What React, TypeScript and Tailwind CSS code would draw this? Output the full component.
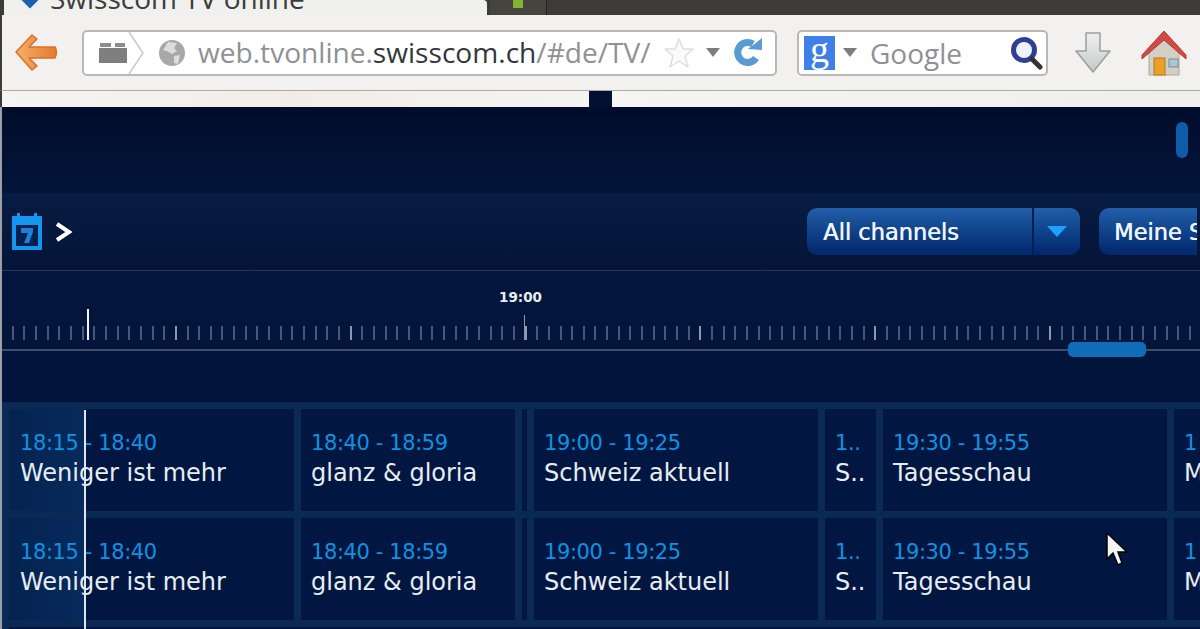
import React from "react"

interface Show {
  width: string
  pad: string
  time: string
  title: string
}

const SHOWS: Show[] = [
  { width: "w-[285px]", pad: "pl-[11px]", time: "18:15 - 18:40", title: "Weniger ist mehr" },
  { width: "w-[214px]", pad: "pl-[10px]", time: "18:40 - 18:59", title: "glanz & gloria" },
  { width: "w-[5px]", pad: "pl-0", time: "", title: "" },
  { width: "w-[284px]", pad: "pl-[10px]", time: "19:00 - 19:25", title: "Schweiz aktuell" },
  { width: "w-[51px]", pad: "pl-[10px]", time: "1..", title: "S..", },
  { width: "w-[284px]", pad: "pl-[10px]", time: "19:30 - 19:55", title: "Tagesschau" },
  { width: "w-[60px]", pad: "pl-[10px]", time: "1", title: "M" },
]

const TICKS = Array.from({ length: 102 }, (_, i) => i + 1)

function BackArrow() {
  return (
    <svg width="46" height="42" viewBox="0 0 46 42" className="shrink-0">
      <defs>
        <linearGradient id="orange" x1="0" y1="0" x2="1" y2="0">
          <stop offset="0" stopColor="#f3b069" />
          <stop offset="1" stopColor="#e57a2e" />
        </linearGradient>
      </defs>
      <path
        d="M1 20 L17 3 L22 7 L14 15 L40 15 Q43 20 40 26 L14 26 L22 34 L17 38 Z"
        fill="url(#orange)"
        stroke="#dc6f2a"
        strokeWidth="1.5"
        strokeLinejoin="round"
      />
    </svg>
  )
}

function Globe() {
  return (
    <svg width="28" height="26" viewBox="0 0 28 26" className="shrink-0">
      <circle cx="14" cy="13" r="13" fill="#a8a8a8" />
      <path d="M10 2 L19 3 L16 8 L19 11 L14 14 L9 11 L5 10 Z M16 16 L22 15 L20 24 L16 23 Z" fill="#dcdcdc" />
    </svg>
  )
}

function Star() {
  return (
    <svg width="32" height="32" viewBox="0 0 32 32" className="shrink-0">
      <path
        d="M16 2 L20 12 L30 12 L22 19 L25 30 L16 24 L7 30 L10 19 L2 12 L12 12 Z"
        fill="#fbfbfb"
        stroke="#dedede"
        strokeWidth="1.5"
        strokeLinejoin="round"
      />
    </svg>
  )
}

function Reload() {
  return (
    <svg width="30" height="32" viewBox="0 0 30 32" className="shrink-0">
      <path d="M23 21 A10 10 0 1 1 20 7" fill="none" stroke="#5b9bd3" strokeWidth="7" />
      <path d="M15 12 L29 13 L29 1 Z" fill="#5b9bd3" />
    </svg>
  )
}

function Magnifier() {
  return (
    <svg width="33" height="34" viewBox="0 0 33 34" className="shrink-0">
      <circle cx="14" cy="14" r="10.5" fill="#eef3fb" stroke="#2f3f96" strokeWidth="5" />
      <path d="M22 23 L30 31" stroke="#333" strokeWidth="5" strokeLinecap="round" />
    </svg>
  )
}

function DownArrow() {
  return (
    <svg width="36" height="42" viewBox="0 0 36 42" className="shrink-0">
      <defs>
        <linearGradient id="silver" x1="0" y1="0" x2="0" y2="1">
          <stop offset="0" stopColor="#eef0ef" />
          <stop offset="1" stopColor="#c4cac8" />
        </linearGradient>
      </defs>
      <path
        d="M11 1 L25 1 L25 19 L35 19 L18 40 L1 19 L11 19 Z"
        fill="url(#silver)"
        stroke="#9a9f9e"
        strokeWidth="1.5"
        strokeLinejoin="round"
      />
    </svg>
  )
}

function Home() {
  return (
    <svg width="46" height="46" viewBox="0 0 46 46" className="shrink-0">
      <path d="M8 20 L23 6 L38 20 L38 45 L8 45 Z" fill="#d3cfc4" stroke="#aaa69a" />
      <path d="M1 25 L23 1 L45 25 L45 29 L23 10 L1 29 Z" fill="#cf4b45" stroke="#b73a36" strokeLinejoin="round" />
      <rect x="13" y="28" width="11" height="17" fill="#e7a126" stroke="#b47a15" />
      <rect x="28" y="29" width="9" height="8" fill="#a9c7d9" stroke="#7b8c94" />
    </svg>
  )
}

function Calendar() {
  return (
    <svg width="30" height="38" viewBox="0 0 30 38" className="shrink-0">
      <path d="M0 3 H5 V0 H8 V3 H22 V0 H25 V3 H30 V37 H0 Z" fill="#1496f0" />
      <rect x="4" y="12" width="22" height="21" fill="#06204e" />
      <path d="M9 15 H21 V19 L17 30 H12 L16 20 H9 Z" fill="#1682d8" />
    </svg>
  )
}

function MouseCursor() {
  return (
    <svg width="24" height="38" viewBox="0 0 24 38" className="absolute left-[1105px] top-[532px]">
      <path d="M2 1 L2 27 L8 21 L13 33 L17 31 L13 20 L22 20 Z" fill="#f5f5f5" stroke="#000" strokeWidth="1.5" />
    </svg>
  )
}

function ShowCell({ show, highlight }: { show: Show; highlight: boolean }) {
  return (
    <div className={`${show.width} ${show.pad} relative h-full shrink-0 overflow-hidden whitespace-nowrap bg-[#011741] pt-[20px]`}>
      {highlight && <div className="absolute inset-y-0 left-0 w-[75px] bg-gradient-to-r from-[#042350] to-[#072a5c]" />}
      <div className="relative text-[21px] leading-[28px] tracking-[-0.4px] text-[#0d93e2]">{show.time}</div>
      <div className="relative text-[24px] leading-[32px] text-[#e8edf2]">{show.title}</div>
    </div>
  )
}

export default function App() {
  return (
    <div className="relative flex h-[629px] w-[1200px] flex-col overflow-hidden bg-[#02112f] font-['DejaVu_Sans',sans-serif]">
      {/* tab strip */}
      <div className="flex h-[15px] shrink-0 overflow-hidden bg-[#3c3b37] font-['Open_Sans',sans-serif]">
        <div className="ml-[4px] flex h-full w-[483px] items-end rounded-tr-[4px] bg-[#f0f0ee] pl-[20px]">
          <div className="mb-[9px] h-[12px] w-[12px] shrink-0 rotate-45 bg-[#1c5fae]" />
          <span className="mb-[1px] ml-[14px] whitespace-nowrap text-[28px] leading-[32px] text-[#3c3c3c]">Swisscom TV online</span>
        </div>
        <div className="ml-[3px] flex h-full w-[57px] justify-center border-r border-[#25241f] bg-[#45443f]">
          <div className="h-[8px] w-[10px] bg-[#84b334]" />
        </div>
      </div>

      {/* browser toolbar */}
      <div className="flex h-[76px] shrink-0 items-center border-b border-l-2 border-b-[#a9a9a7] border-l-[#3c3b37] bg-[#f2f1f0] pl-[13px] font-['Open_Sans',sans-serif]">
        <BackArrow />
        <div className="ml-[21px] flex h-[46px] w-[695px] shrink-0 items-center rounded-[5px] border-2 border-[#b9b8b5] bg-white pl-[15px]">
          <div className="flex h-[20px] w-[28px] shrink-0 flex-col">
            <div className="flex h-[4px] gap-[4px] px-[1px]">
              <div className="w-[11px] bg-[#8d8d8d]" />
              <div className="w-[10px] bg-[#8d8d8d]" />
            </div>
            <div className="mt-[1px] flex-1 bg-[#7f7f7f]" />
          </div>
          <svg width="16" height="42" viewBox="0 0 16 42" className="ml-[1px] shrink-0">
            <path d="M1 0 L15 21 L1 42" fill="none" stroke="#c9c8c5" strokeWidth="1.5" />
          </svg>
          <div className="ml-[14px]">
            <Globe />
          </div>
          <div className="ml-[12px] w-[455px] shrink-0 overflow-hidden whitespace-nowrap text-[28.1px] text-[#8f9193]">
            web.tvonline.<span className="text-[#33373c]">swisscom.ch</span>/#de/TV/
          </div>
          <div className="ml-[10px]">
            <Star />
          </div>
          <div className="ml-[11px] h-0 w-0 shrink-0 border-x-[7px] border-t-[9px] border-x-transparent border-t-[#7d7d7d]" />
          <div className="ml-[13px]">
            <Reload />
          </div>
        </div>

        <div className="ml-[20px] flex h-[46px] w-[251px] shrink-0 items-center rounded-[5px] border-2 border-[#b9b8b5] bg-white pl-[5px]">
          <div className="flex h-[34px] w-[31px] shrink-0 items-center justify-center overflow-hidden bg-[#3f7fe8] pb-[8px] font-['Liberation_Serif',serif] text-[38px] leading-none text-white">
            g
          </div>
          <div className="ml-[8px] h-0 w-0 shrink-0 border-x-[7px] border-t-[9px] border-x-transparent border-t-[#7d7d7d]" />
          <span className="ml-[13px] w-[140px] shrink-0 text-[28px] text-[#8f9193]">Google</span>
          <Magnifier />
        </div>

        <div className="ml-[27px]">
          <DownArrow />
        </div>
        <div className="ml-[30px]">
          <Home />
        </div>
      </div>

      {/* page strip above the player */}
      <div className="flex h-[16px] shrink-0 border-l-2 border-[#3c3b37]">
        <div className="w-[587px] bg-gradient-to-r from-[#f6f5f3] via-[#f3ece6] to-[#f5f4f2]" />
        <div className="w-[23px] bg-[#021033]" />
        <div className="flex-1 bg-gradient-to-r from-[#f5f5f3] to-[#eeeeec]" />
      </div>

      <div className="flex min-h-0 flex-1 flex-col border-l-2 border-[#9aa0a6]">
        {/* player band */}
        <div className="flex h-[86px] shrink-0 justify-end bg-gradient-to-b from-[#010c2b] to-[#03153b] pr-[12px] pt-[15px]">
          <div className="h-[36px] w-[12px] rounded-full bg-[#0d5ca8]" />
        </div>

        {/* date and channel filter */}
        <div className="flex h-[78px] shrink-0 items-center border-b border-[#22375c] bg-gradient-to-b from-[#081b42] to-[#041538] pl-[10px] pr-[3px]">
          <Calendar />
          <svg width="18" height="20" viewBox="0 0 18 20" className="ml-[13px] shrink-0">
            <path d="M2 2 L14 10 L2 18" fill="none" stroke="#fff" strokeWidth="4" />
          </svg>
          <div className="ml-[734px] flex h-[47px] w-[273px] shrink-0 items-stretch overflow-hidden rounded-[10px] bg-gradient-to-b from-[#215fa8] to-[#03266c] text-[22.5px] text-[#eef4fa] [text-shadow:0.5px_0_0_#eef4fa]">
            <div className="flex w-[227px] items-center border-r-2 border-[#04204e] pl-[16px] pt-[2px]">All channels</div>
            <div className="flex flex-1 items-center justify-center">
              <div className="h-0 w-0 border-x-[10px] border-t-[11px] border-x-transparent border-t-[#1ea0ff]" />
            </div>
          </div>
          <div className="ml-[19px] flex h-[47px] flex-1 items-center overflow-hidden whitespace-nowrap rounded-l-[10px] bg-gradient-to-b from-[#215fa8] to-[#03266c] pl-[15px] pt-[2px] text-[22.5px] text-[#eef4fa] [text-shadow:0.5px_0_0_#eef4fa]">
            Meine S
          </div>
        </div>

        {/* time ruler */}
        <div className="relative flex h-[80px] shrink-0 flex-col justify-end border-b-2 border-[#3f4d68] bg-[#03153a]">
          <div className="mb-[9px] flex h-[14px] items-stretch">
            {TICKS.map((t) => (
              <div key={t} className="flex w-[11.67px] shrink-0 justify-end">
                <div className={`w-[2px] ${t % 15 === 0 ? "bg-[#8c98ae]" : "bg-[#47577a]"}`} />
              </div>
            ))}
          </div>
          <span className="absolute left-[497px] top-[17px] text-[13.5px] font-bold leading-[18px] text-[#e8edf2]">19:00</span>
          <div className="absolute bottom-[9px] left-[522px] h-[25px] w-px bg-[#8c98ae]" />
          <div className="absolute bottom-[9px] left-[85px] h-[31px] w-[2px] bg-[#f2f4f7]" />
          <div className="absolute left-[1066px] top-[71px] h-[15px] w-[78px] rounded-[5px] bg-[#0e6cb9]" />
        </div>

        <div className="h-[51px] shrink-0 bg-[#02143a]" />

        {/* programme grid */}
        <div className="flex flex-1 flex-col gap-[7px] bg-[#0a2a55] pl-[7px] pt-[7px]">
          {[0, 1].map((row) => (
            <div key={row} className="flex h-[102px] shrink-0 gap-[7px]">
              {SHOWS.map((show, i) => (
                <ShowCell key={i} show={show} highlight={i === 0} />
              ))}
            </div>
          ))}
          <div className="h-[10px] shrink-0 bg-[#011741]" />
        </div>
      </div>

      {/* now line */}
      <div className="absolute bottom-0 left-[84px] top-[410px] w-[2px] bg-[#dfe6ee]" />
      <MouseCursor />
    </div>
  )
}
